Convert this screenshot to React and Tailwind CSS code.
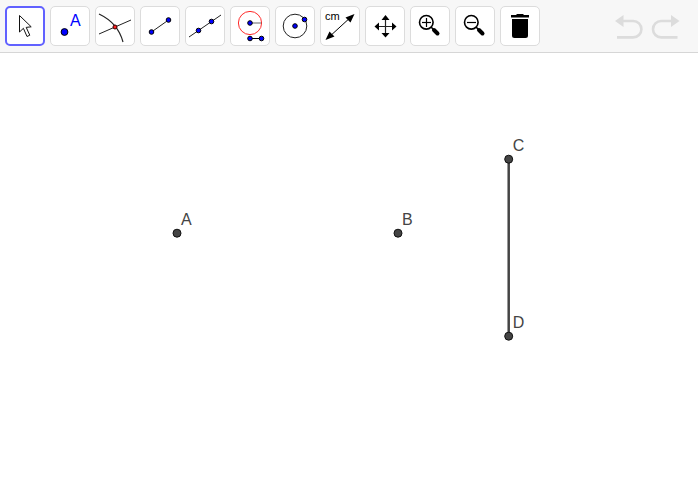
import React from "react";

function Dot({ x, y, r = 2.3, fill = "#0000ff" }) {
  return <circle cx={x} cy={y} r={r} fill={fill} stroke="#000" strokeWidth="1" />;
}

function Magnifier({ plus }) {
  return (
    <g>
      <circle cx="16.3" cy="16.3" r="6.8" fill="none" stroke="#000" strokeWidth="1.6" />
      <path d="M12 16.5H21" stroke="#000" strokeWidth="1.2" />
      {plus && <path d="M16.5 12V21" stroke="#000" strokeWidth="1.2" />}
      <path d="M21 21L24 24" stroke="#000" strokeWidth="1.6" />
      <path d="M24 24L27.5 27.5" stroke="#000" strokeWidth="4" strokeLinecap="round" />
    </g>
  );
}

const tools = [
  {
    name: "Move",
    icon: (
      <path
        d="M14.5 9.5V26L18.4 22.3L22 30.5L24.8 29.2L21.2 21.4L26.2 20.8Z"
        fill="#fff"
        stroke="#111"
        strokeWidth="1"
      />
    ),
  },
  {
    name: "Point",
    icon: (
      <g>
        <Dot x={14.5} y={26} r={3.4} />
        <text x="20" y="20" fontSize="16" fill="#0000ff" className="font-['Liberation_Sans',sans-serif]">
          A
        </text>
      </g>
    ),
  },
  {
    name: "Intersect",
    icon: (
      <g fill="none" stroke="#222">
        <path d="M4 28L36 14" />
        <path d="M4 8Q23 17 28 36" strokeWidth="1.2" />
        <circle cx="20" cy="21" r="2" fill="#ff2222" stroke="#300" />
      </g>
    ),
  },
  {
    name: "Segment",
    icon: (
      <g>
        <path d="M11.5 26L28.5 14" stroke="#222" />
        <Dot x={11.5} y={26} />
        <Dot x={28.5} y={14} />
      </g>
    ),
  },
  {
    name: "Line",
    icon: (
      <g>
        <path d="M4 31L36 9" stroke="#222" />
        <Dot x={13.5} y={24.5} />
        <Dot x={26.5} y={15.5} />
      </g>
    ),
  },
  {
    name: "Compass",
    icon: (
      <g>
        <circle cx="20" cy="17" r="11.6" fill="none" stroke="#ff2a2a" />
        <path d="M20 17H31.5" stroke="#666" />
        <path d="M20 32.5H31.5" stroke="#000" />
        <Dot x={20} y={17} />
        <Dot x={20} y={32.5} />
        <Dot x={31.5} y={32.5} />
      </g>
    ),
  },
  {
    name: "Circle with Center",
    icon: (
      <g>
        <circle cx="20" cy="20" r="11.8" fill="none" stroke="#222" />
        <Dot x={20} y={20} />
        <Dot x={29.5} y={13.5} />
      </g>
    ),
  },
  {
    name: "Distance or Length",
    icon: (
      <g>
        <text x="5" y="14" fontSize="11" fill="#000" className="font-['Liberation_Sans',sans-serif]">
          cm
        </text>
        <path d="M8 32L32 10" stroke="#000" />
        <path d="M5.5 34L9.5 25.5L14.5 30.5ZM34.5 8L30.5 16.5L25.5 11.5Z" fill="#000" />
      </g>
    ),
  },
  {
    name: "Move Graphics View",
    icon: (
      <g>
        <path d="M20.5 13V28M13 20.5H28" stroke="#222" strokeWidth="1.2" />
        <path
          d="M20.5 9L24.5 14H16.5ZM20.5 31.5L24.5 27H16.5ZM9.5 20.5L14 16.5V24.5ZM31.5 20.5L27 16.5V24.5Z"
          fill="#000"
        />
      </g>
    ),
  },
  { name: "Zoom In", icon: <Magnifier plus /> },
  { name: "Zoom Out", icon: <Magnifier /> },
  {
    name: "Delete",
    icon: (
      <path
        d="M11 9H16L17 8H23L24 9H29V11.5H11ZM12 13H28V29.5Q28 32 25.5 32H14.5Q12 32 12 29.5Z"
        fill="#000"
      />
    ),
  },
];

function ToolButton({ name, icon, selected }) {
  return (
    <button
      type="button"
      aria-label={name}
      aria-pressed={selected}
      className={
        "flex size-10 shrink-0 items-center justify-center rounded-[5px] bg-white " +
        (selected ? "border-2 border-[#6161ff]" : "border border-[#dcdcdc]")
      }
    >
      <svg viewBox="0 0 40 40" className="size-10 shrink-0" aria-hidden="true">
        {icon}
      </svg>
    </button>
  );
}

function HistoryButton({ name, children }) {
  return (
    <button type="button" disabled aria-label={name} className="flex h-10 w-8 items-center justify-center">
      <svg viewBox="0 0 32 40" className="h-10 w-8 shrink-0" aria-hidden="true">
        {children}
      </svg>
    </button>
  );
}

const points = [
  { name: "A", x: 177, y: 180 },
  { name: "B", x: 398, y: 180 },
  { name: "C", x: 508.7, y: 106 },
  { name: "D", x: 508.7, y: 283 },
];

export default function App() {
  return (
    <div className="flex min-h-screen flex-col bg-white font-['Liberation_Sans',Arial,sans-serif]">
      <header className="mr-0.5 flex items-center justify-between border-b border-[#d6d6d6] bg-[#f7f7f7] pt-1.5 pr-4 pb-1.5 pl-[5px]">
        <div role="toolbar" aria-label="Tools" className="flex gap-[5px]">
          {tools.map((tool, i) => (
            <ToolButton key={tool.name} name={tool.name} icon={tool.icon} selected={i === 0} />
          ))}
        </div>
        <div className="flex gap-1">
          <HistoryButton name="Undo">
            <path d="M8 15H19.2A8.2 8.2 0 0 1 19.2 31.4H3" fill="none" stroke="#dcdcdc" strokeWidth="2.6" />
            <path d="M1 15L9.5 9V21Z" fill="#dcdcdc" />
          </HistoryButton>
          <HistoryButton name="Redo">
            <path d="M22 15H11.2A8.2 8.2 0 0 0 11.2 31.4H27.5" fill="none" stroke="#dcdcdc" strokeWidth="2.6" />
            <path d="M29.5 15L21 9V21Z" fill="#dcdcdc" />
          </HistoryButton>
        </div>
      </header>
      <main className="flex flex-1">
        <svg
          className="min-h-[440px] w-full flex-1"
          role="img"
          aria-label="Points A and B, and segment CD"
        >
          <path d="M508.7 106V283" stroke="#444" strokeWidth="2.5" />
          {points.map((p) => (
            <g key={p.name}>
              <circle cx={p.x} cy={p.y + 0.2} r="4" fill="#444" stroke="#111" strokeWidth="1" />
              <text x={p.x + 4} y={p.y - 8} fontSize="16" fill="#444">
                {p.name}
              </text>
            </g>
          ))}
        </svg>
      </main>
    </div>
  );
}
